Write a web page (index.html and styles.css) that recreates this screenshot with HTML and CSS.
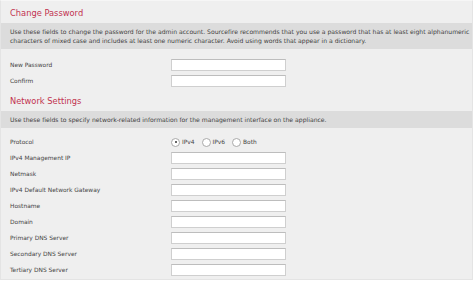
FILE: index.html
```html
<!DOCTYPE html>
<html>
<head>
<meta charset="utf-8">
<link rel="stylesheet" href="styles.css">
</head>
<body>
<div class="panel">
  <h2 class="heading">Change Password</h2>
  <div class="band">Use these fields to change the password for the admin account. Sourcefire recommends that you use a password that has at least eight alphanumeric<br>characters of mixed case and includes at least one numeric character. Avoid using words that appear in a dictionary.</div>
  <div class="rows rows-first">
    <div class="row"><span class="label">New Password</span><span class="field"></span></div>
    <div class="row"><span class="label">Confirm</span><span class="field"></span></div>
  </div>
  <h2 class="heading">Network Settings</h2>
  <div class="band">Use these fields to specify network-related information for the management interface on the appliance.</div>
  <div class="rows rows-second">
    <div class="row"><span class="label">Protocol</span>
      <span class="radios">
        <span class="radio"><span class="dot on"></span>IPv4</span>
        <span class="radio"><span class="dot"></span>IPv6</span>
        <span class="radio"><span class="dot"></span>Both</span>
      </span>
    </div>
    <div class="row"><span class="label">IPv4 Management IP</span><span class="field"></span></div>
    <div class="row"><span class="label">Netmask</span><span class="field"></span></div>
    <div class="row"><span class="label">IPv4 Default Network Gateway</span><span class="field"></span></div>
    <div class="row"><span class="label">Hostname</span><span class="field"></span></div>
    <div class="row"><span class="label">Domain</span><span class="field"></span></div>
    <div class="row"><span class="label">Primary DNS Server</span><span class="field"></span></div>
    <div class="row"><span class="label">Secondary DNS Server</span><span class="field"></span></div>
    <div class="row"><span class="label">Tertiary DNS Server</span><span class="field"></span></div>
  </div>
</div>
</body>
</html>
```
FILE: styles.css
```css
html, body {
  margin: 0;
  padding: 0;
  background: #ffffff;
}
body {
  font-family: "DejaVu Sans", Verdana, sans-serif;
  color: #444444;
}
.panel {
  width: 471px;
  height: 278px;
  background: #efefef;
  border: 1px solid #e4e4e4;
  border-top-color: #f6f6f6;
  overflow: hidden;
}
.heading {
  margin: 0;
  padding: 5px 9px 2px;
  font-size: 8.3px;
  line-height: 15px;
  font-weight: normal;
  color: #c2334f;
}
.band {
  background: #dcdcdc;
  padding: 4px 0 4px 9px;
  font-size: 6.1px;
  line-height: 9px;
  color: #3f3f3f;
  white-space: nowrap;
}
.rows-first {
  margin-top: 8px;
}
.rows-second {
  margin-top: 6px;
}
.row {
  display: flex;
  align-items: center;
  height: 16px;
  font-size: 5.9px;
}
.label {
  width: 161px;
  padding-left: 9px;
}
.field {
  width: 113px;
  height: 10px;
  background: #ffffff;
  border: 1px solid #cfcfcf;
  border-top-color: #bdbdbd;
  box-sizing: content-box;
}
.radios {
  display: flex;
  align-items: center;
}
.radio {
  display: flex;
  align-items: center;
  margin-right: 7px;
}
.dot {
  width: 7px;
  height: 7px;
  border: 1px solid #a9a9a9;
  border-radius: 50%;
  background: #ffffff;
  margin-right: 2px;
  position: relative;
}
.dot.on::after {
  content: "";
  position: absolute;
  left: 2.5px;
  top: 2.5px;
  width: 2px;
  height: 2px;
  border-radius: 50%;
  background: #333333;
}
```
